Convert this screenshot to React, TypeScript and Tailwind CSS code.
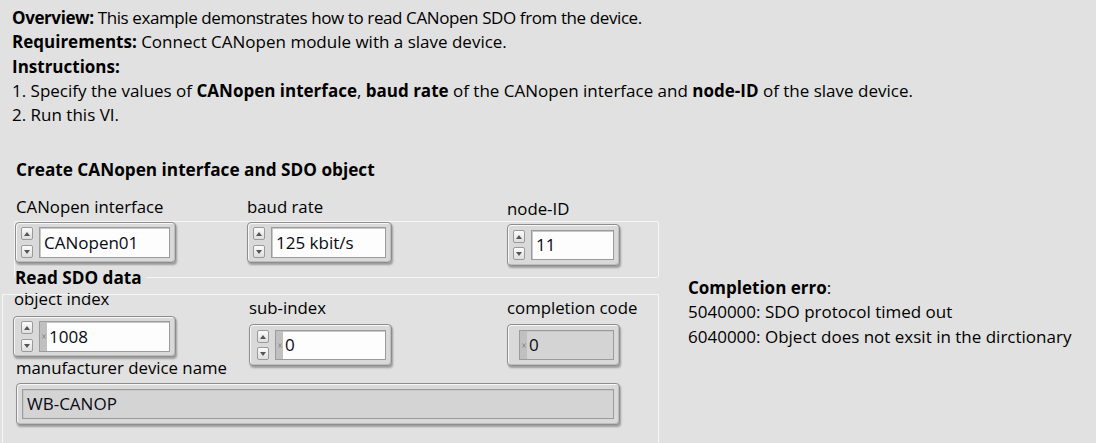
import React from 'react';

// LabVIEW-style front panel: controls sit at fixed spots on the panel canvas
const FONT = "font-['Open_Sans','Noto_Sans',sans-serif]";

function Arrow({ up }: { up?: boolean }) {
  return (
    <div className="w-[12px] h-[13px] rounded-[2px] border border-[#9a9a9a] bg-gradient-to-b from-[#fbfbfb] to-[#dedede] flex items-center justify-center">
      <svg width="6" height="4" viewBox="0 0 6 4">
        {up ? <path d="M0 4 L3 0 L6 4 Z" fill="#555" /> : <path d="M0 0 L3 4 L6 0 Z" fill="#555" />}
      </svg>
    </div>
  );
}

function Spinner() {
  return (
    <div className="flex flex-col justify-between w-[12px]">
      <Arrow up />
      <Arrow />
    </div>
  );
}

function Radix() {
  return (
    <div className="w-[7px] self-stretch bg-[#c0c0c0] flex items-center justify-center">
      <svg width="4" height="5" viewBox="0 0 4 5">
        <path d="M0.5 0.5 L3.5 4.5 M3.5 0.5 L0.5 4.5" stroke="#7d7d7d" strokeWidth="0.8" />
      </svg>
    </div>
  );
}

type CtrlProps = {
  box: string;
  value: string;
  spin?: boolean;
  radix?: boolean;
  indicator?: boolean;
  pad: string;
};

function Control({ box, value, spin, radix, indicator, pad }: CtrlProps) {
  return (
    <div
      className={`absolute ${box} ${pad} rounded-[4px] border border-[#8e8e8e] bg-[#d9d9d9] shadow-[inset_1px_1px_0_#f7f7f7,inset_-1px_-1px_0_#bdbdbd,1px_2px_2px_rgba(0,0,0,0.3)] flex items-stretch gap-[6px]`}
    >
      {spin && <Spinner />}
      <div
        className={`flex-1 flex items-center border border-[#9b9b9b] shadow-[inset_1px_1px_0_#c8c8c8] ${
          indicator ? 'bg-[#d4d4d4]' : 'bg-[#fdfdfd]'
        }`}
      >
        {radix && <Radix />}
        <span className={`text-[17px] text-[#0a0a14] ${radix ? 'pl-[2px]' : 'pl-[4px]'}`}>{value}</span>
      </div>
    </div>
  );
}

function Label({ pos, children, bold }: { pos: string; children: React.ReactNode; bold?: boolean }) {
  return (
    <div className={`absolute ${pos} leading-[20px] text-black whitespace-nowrap ${bold ? 'font-bold text-[17.2px]' : 'text-[16.8px]'}`}>
      {children}
    </div>
  );
}

export default function App() {
  return (
    <div className={`relative w-[1096px] h-[443px] overflow-hidden bg-[#e1e1e1] text-black ${FONT}`}>
      <div className="pl-[12px] pt-[6px] text-[17px] leading-[24.3px]">
        <p className="tracking-[-0.4px]">
          <b>Overview:</b> This example demonstrates how to read CANopen SDO from the device.
        </p>
        <p>
          <b>Requirements:</b> Connect CANopen module with a slave device.
        </p>
        <p>
          <b>Instructions:</b>
        </p>
        <p>
          1. Specify the values of <b>CANopen interface</b>, <b>baud rate</b> of the CANopen interface and{' '}
          <b>node-ID</b> of the slave device.
        </p>
        <p>2. Run this VI.</p>
      </div>

      {/* decoration frames */}
      <div className="absolute left-[14px] top-[221px] w-[645px] h-[57px] rounded-[2px] border border-[#f6f6f6]" />
      <div className="absolute left-[2px] top-[294px] w-[657px] h-[160px] rounded-[2px] border border-[#f6f6f6]" />

      <Label pos="left-[16px] top-[160px]" bold>
        Create CANopen interface and SDO object
      </Label>

      <Label pos="left-[16px] top-[197px]">CANopen interface</Label>
      <Control box="left-[15px] top-[222px] w-[161px] h-[41px]" pad="pl-[5px] pr-[5px] py-[4px]" value="CANopen01" spin />

      <Label pos="left-[247px] top-[197px]">baud rate</Label>
      <Control box="left-[247px] top-[222px] w-[145px] h-[41px]" pad="pl-[5px] pr-[5px] py-[4px]" value="125 kbit/s" spin />

      <Label pos="left-[507px] top-[199px]">node-ID</Label>
      <Control box="left-[507px] top-[224px] w-[113px] h-[42px]" pad="pl-[5px] pr-[5px] py-[5px]" value="11" spin />

      <div className="absolute left-[15px] top-[266px] pr-[4px] bg-[#e1e1e1] text-[17.2px] leading-[24px] font-bold whitespace-nowrap">
        Read SDO data
      </div>

      <Label pos="left-[14px] top-[289px]">object index</Label>
      <div className="absolute left-[2px] top-[294px] w-[657px] h-0 border-t border-[#f6f6f6]" />
      <Control box="left-[13px] top-[316px] w-[163px] h-[41px]" pad="pl-[7px] pr-[5px] py-[4px]" value="1008" spin radix />

      <Label pos="left-[249px] top-[298px]">sub-index</Label>
      <Control box="left-[249px] top-[324px] w-[143px] h-[42px]" pad="pl-[7px] pr-[5px] py-[5px]" value="0" spin radix />

      <Label pos="left-[507px] top-[298px]">completion code</Label>
      <Control box="left-[507px] top-[324px] w-[113px] h-[42px]" pad="pl-[11px] pr-[5px] py-[5px]" value="0" radix indicator />

      <Label pos="left-[16px] top-[358px]">manufacturer device name</Label>
      <Control box="left-[16px] top-[383px] w-[604px] h-[42px]" pad="pl-[5px] pr-[5px] py-[5px]" value="WB-CANOP" indicator />

      <div className="absolute left-[688px] top-[276px] text-[17px] leading-[24.3px] whitespace-nowrap">
        <p>
          <b>Completion erro</b>:
        </p>
        <p>5040000: SDO protocol timed out</p>
        <p>6040000: Object does not exsit in the dirctionary</p>
      </div>
    </div>
  );
}
